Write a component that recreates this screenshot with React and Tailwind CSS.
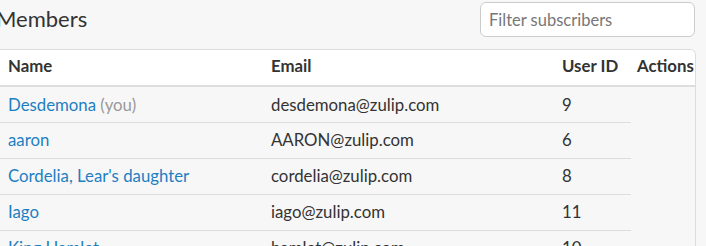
import React from 'react';

const members = [
  { name: 'Desdemona', you: true, email: 'desdemona@zulip.com', id: 9 },
  { name: 'aaron', email: 'AARON@zulip.com', id: 6 },
  { name: "Cordelia, Lear's daughter", email: 'cordelia@zulip.com', id: 8 },
  { name: 'Iago', email: 'iago@zulip.com', id: 11 },
  { name: 'King Hamlet', email: 'hamlet@zulip.com', id: 10 },
];

const App = () => {
  return (
    <div className="w-[706px] h-[246px] overflow-hidden bg-[#f7f7f7] text-[#333] font-['Lato',sans-serif]">
      {/* Header */}
      <div className="flex items-start justify-between pr-[11px] pt-[2px] h-[49px]">
        <h1 className="ml-[-4px] mt-[3px] text-[22px] leading-[28px]">Members</h1>
        <input
          type="text"
          placeholder="Filter subscribers"
          className="w-[215px] h-[35px] rounded-md border border-[#ccc] bg-white px-[8px] text-[16.5px] outline-none placeholder:text-[#777]"
        />
      </div>

      {/* Table */}
      <div className="w-[696px] border-t border-r border-[#ddd] rounded-tr-md overflow-hidden">
        <table className="w-full table-fixed border-collapse text-[16.8px]">
          <colgroup>
            <col className="w-[263px]" />
            <col className="w-[291px]" />
            <col className="w-[77px]" />
            <col />
          </colgroup>
          <thead>
            <tr className="bg-white h-[36px] border-b-2 border-[#ddd]">
              <th className="text-left font-bold pl-[8px] pb-[3px]">Name</th>
              <th className="text-left font-bold pl-[8px] pb-[3px]">Email</th>
              <th className="text-left font-bold pl-[8px] pb-[3px] whitespace-nowrap">User ID</th>
              <th className="text-left font-bold pl-[6px] pb-[3px] whitespace-nowrap">Actions</th>
            </tr>
          </thead>
          <tbody>
            {members.map((m) => (
              <tr key={m.id} className="h-[36px]">
                <td className="pl-[8px] border-b border-[#ddd]">
                  <span className="text-[#1d7fc2]">{m.name}</span>
                  {m.you && <span className="text-[#999]"> (you)</span>}
                </td>
                <td className="pl-[8px] border-b border-[#ddd]">{m.email}</td>
                <td className="pl-[8px] border-b border-[#ddd]">{m.id}</td>
                <td></td>
              </tr>
            ))}
          </tbody>
        </table>
      </div>
    </div>
  );
};

export default App;
